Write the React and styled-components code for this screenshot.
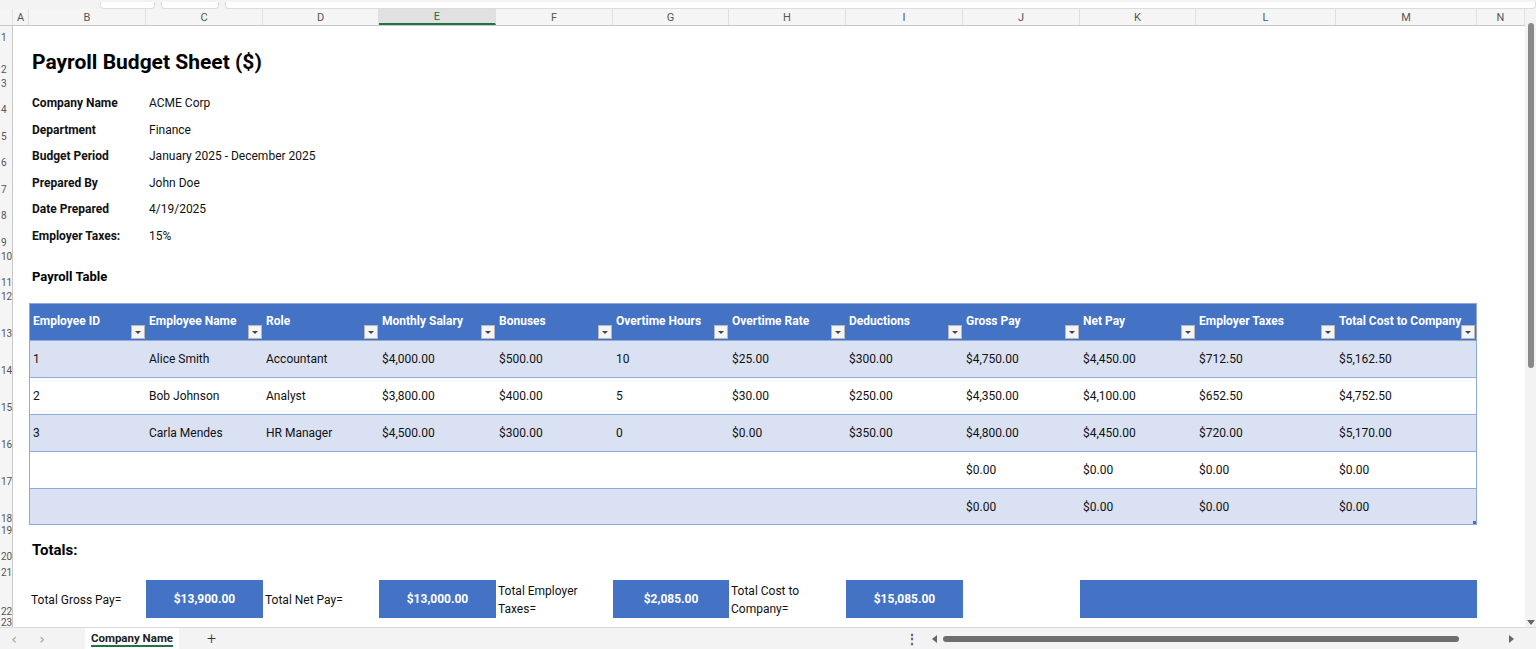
import React from 'react';
import styled, { createGlobalStyle } from 'styled-components';

const GlobalStyle = createGlobalStyle`
  html, body { margin: 0; padding: 0; background: #fff; overflow: hidden; }
  body { font-family: Roboto, "Liberation Sans", sans-serif; color: #1f1f1f; }
`;

const COLS = '13px 16px 117px 117px 116px 117px 117px 116px 117px 117px 117px 116px 140px 141px 48px';
const LETTERS = ['A', 'B', 'C', 'D', 'E', 'F', 'G', 'H', 'I', 'J', 'K', 'L', 'M', 'N'];
const ROW_H = [18, 32, 14, 26, 27, 26, 27, 26, 27, 14, 26, 14, 37, 37, 37, 37, 37, 37, 12, 26, 16, 39, 11];

const Page = styled.div`
  width: 1536px;
  height: 649px;
  display: flex;
  flex-direction: column;
  overflow: hidden;
`;

const TopStrip = styled.div`
  height: 9px;
  background: #f3f3f3;
  display: flex;
  gap: 6px;
  padding-left: 100px;
  align-items: flex-end;
`;

const StripBox = styled.div`
  width: ${p => p.w}px;
  height: 6px;
  background: #fff;
  border: 1px solid #dcdcdc;
  border-top: none;
  border-radius: 0 0 4px 4px;
`;

const Main = styled.div`
  flex: 1;
  display: flex;
  min-height: 0;
`;

const Grid = styled.div`
  width: 1525px;
  display: flex;
  flex-direction: column;
  overflow: hidden;
`;

const Row = styled.div`
  display: grid;
  grid-template-columns: ${COLS};
  height: ${p => p.h}px;
  flex-shrink: 0;
`;

const ColHead = styled.div`
  height: 16px;
  display: grid;
  grid-template-columns: ${COLS};
  background: #f5f5f5;
  border-bottom: 1px solid #c8c8c8;
  flex-shrink: 0;
`;

const ColLetter = styled.div`
  font-size: 11px;
  color: ${p => (p.active ? '#1e6e42' : '#555')};
  background: ${p => (p.active ? '#e1e1e1' : 'transparent')};
  border-bottom: ${p => (p.active ? '2px solid #217346' : 'none')};
  border-right: 1px solid #e0e0e0;
  display: flex;
  align-items: center;
  justify-content: center;
`;

const RowNum = styled.div`
  background: #f5f5f5;
  border-right: 1px solid #c8c8c8;
  font-size: 10px;
  color: #555;
  display: flex;
  align-items: flex-end;
  padding-left: 1px;
  padding-bottom: 1px;
  overflow: hidden;
`;

const Title = styled.div`
  grid-column: 3 / 8;
  font-size: 21px;
  font-weight: 700;
  color: #000;
  display: flex;
  align-items: center;
  padding-left: 3px;
  padding-top: 4px;
`;

const Label = styled.div`
  font-size: 12px;
  font-weight: ${p => (p.bold ? 700 : 400)};
  color: #111;
  display: flex;
  align-items: center;
  padding-left: 3px;
  white-space: nowrap;
`;

const Section = styled.div`
  grid-column: 3 / 6;
  font-size: ${p => p.size}px;
  font-weight: 700;
  color: #000;
  display: flex;
  align-items: center;
  padding-left: 3px;
`;

const Cell = styled.div`
  font-size: 12px;
  display: flex;
  align-items: center;
  padding-left: 3px;
  white-space: nowrap;
  position: relative;
  background: ${p => (p.head ? '#4472c4' : p.band ? '#d9e1f2' : '#fff')};
  color: ${p => (p.head ? '#fff' : '#111')};
  font-weight: ${p => (p.head ? 700 : 400)};
  border-top: 1px solid ${p => (p.first ? '#8eaadb' : '#8eaadb')};
  border-left: ${p => (p.left ? '1px solid #8eaadb' : 'none')};
  border-right: ${p => (p.right ? '1px solid #8eaadb' : 'none')};
  border-bottom: ${p => (p.last ? '1px solid #8eaadb' : 'none')};
`;

const HeadText = styled.span`
  position: relative;
  top: -1px;
`;

const Filter = styled.div`
  position: absolute;
  right: 1px;
  bottom: 1px;
  width: 12px;
  height: 12px;
  background: #f4f4f4;
  border: 1px solid #b8b8b8;
  display: flex;
  align-items: center;
  justify-content: center;
  &::after {
    content: '';
    border-left: 3px solid transparent;
    border-right: 3px solid transparent;
    border-top: 3px solid #444;
  }
`;

const Corner = styled.div`
  position: absolute;
  right: 0;
  bottom: 0;
  width: 3px;
  height: 3px;
  background: #4472c4;
`;

const TotLabel = styled.div`
  font-size: 12px;
  color: #111;
  display: flex;
  align-items: center;
  padding-left: 2px;
  padding-top: 2px;
  line-height: 18px;
`;

const TotBox = styled.div`
  grid-column: ${p => p.span || 'auto'};
  background: #4472c4;
  color: #fff;
  font-size: 12px;
  font-weight: 700;
  display: flex;
  align-items: center;
  justify-content: center;
  margin-top: 1px;
`;

const VScroll = styled.div`
  width: 11px;
  background: #f3f3f3;
  display: flex;
  flex-direction: column;
  align-items: center;
  padding-top: 14px;
`;

const VThumb = styled.div`
  width: 6px;
  height: 345px;
  border-radius: 3px;
  background: #8a8a8a;
`;

const VArrow = styled.div`
  margin-top: auto;
  margin-bottom: 2px;
  border-left: 4px solid transparent;
  border-right: 4px solid transparent;
  border-top: 5px solid #666;
`;

const TabBar = styled.div`
  height: 21px;
  background: #f3f3f3;
  border-top: 1px solid #dadada;
  display: flex;
  align-items: center;
  flex-shrink: 0;
`;

const Nav = styled.div`
  width: 28px;
  text-align: center;
  color: #9a9a9a;
  font-size: 14px;
  font-family: "DejaVu Sans", sans-serif;
`;

const Tab = styled.div`
  margin-left: 29px;
  width: 94px;
  height: 21px;
  background: #fff;
  display: flex;
  align-items: center;
  justify-content: center;
  font-size: 11.5px;
  font-weight: 700;
  color: #222;
  span { border-bottom: 2px solid #217346; line-height: 14px; }
`;

const Plus = styled.div`
  margin-left: 28px;
  font-size: 16px;
  color: #333;
  font-weight: 300;
`;

const Dots = styled.div`
  margin-left: 690px;
  color: #555;
  font-size: 12px;
  font-weight: 700;
`;

const HArrow = styled.div`
  margin-left: ${p => p.ml}px;
  border-top: 4px solid transparent;
  border-bottom: 4px solid transparent;
  ${p => (p.dir === 'left' ? 'border-right: 5px solid #666;' : 'border-left: 5px solid #666;')}
`;

const HThumb = styled.div`
  margin-left: 6px;
  width: 516px;
  height: 6px;
  border-radius: 3px;
  background: #6e6e6e;
`;

const headers = ['Employee ID', 'Employee Name', 'Role', 'Monthly Salary', 'Bonuses', 'Overtime Hours', 'Overtime Rate', 'Deductions', 'Gross Pay', 'Net Pay', 'Employer Taxes', 'Total Cost to Company'];
const rows = [
  ['1', 'Alice Smith', 'Accountant', '$4,000.00', '$500.00', '10', '$25.00', '$300.00', '$4,750.00', '$4,450.00', '$712.50', '$5,162.50'],
  ['2', 'Bob Johnson', 'Analyst', '$3,800.00', '$400.00', '5', '$30.00', '$250.00', '$4,350.00', '$4,100.00', '$652.50', '$4,752.50'],
  ['3', 'Carla Mendes', 'HR Manager', '$4,500.00', '$300.00', '0', '$0.00', '$350.00', '$4,800.00', '$4,450.00', '$720.00', '$5,170.00'],
  ['', '', '', '', '', '', '', '', '$0.00', '$0.00', '$0.00', '$0.00'],
  ['', '', '', '', '', '', '', '', '$0.00', '$0.00', '$0.00', '$0.00'],
];
const info = [
  ['Company Name', 'ACME Corp'],
  ['Department', 'Finance'],
  ['Budget Period', 'January 2025 - December 2025'],
  ['Prepared By', 'John Doe'],
  ['Date Prepared', '4/19/2025'],
  ['Employer Taxes:', '15%'],
];

const R = ({ n, children }) => (
  <Row h={ROW_H[n - 1]}>
    <RowNum>{n}</RowNum>
    {children}
  </Row>
);

export default function App() {
  return (
    <Page>
      <GlobalStyle />
      <TopStrip>
        <StripBox w={55} />
        <StripBox w={58} />
        <StripBox w={1360} />
      </TopStrip>
      <Main>
        <Grid>
          <ColHead>
            <ColLetter />
            {LETTERS.map(l => <ColLetter key={l} active={l === 'E'}>{l}</ColLetter>)}
          </ColHead>
          <R n={1} />
          <R n={2}><div /><Title>Payroll Budget Sheet ($)</Title></R>
          <R n={3} />
          {info.map(([k, v], i) => (
            <R key={k} n={4 + i}><div /><Label bold>{k}</Label><Label>{v}</Label></R>
          ))}
          <R n={10} />
          <R n={11}><div /><Section size={13}>Payroll Table</Section></R>
          <R n={12} />
          <R n={13}>
            <div />
            {headers.map((h, i) => (
              <Cell key={h} head left={i === 0} right={i === 11}>
                <HeadText>{h}</HeadText>
                <Filter />
              </Cell>
            ))}
          </R>
          {rows.map((r, ri) => (
            <R key={ri} n={14 + ri}>
              <div />
              {r.map((v, i) => (
                <Cell key={i} band={ri % 2 === 0} left={i === 0} right={i === 11} last={ri === 4}>
                  {v}
                  {ri === 4 && i === 11 && <Corner />}
                </Cell>
              ))}
            </R>
          ))}
          <R n={19} />
          <R n={20}><div /><Section size={15}>Totals:</Section></R>
          <R n={21} />
          <R n={22}>
            <div />
            <TotLabel>Total Gross Pay=</TotLabel>
            <TotBox>$13,900.00</TotBox>
            <TotLabel>Total Net Pay=</TotLabel>
            <TotBox>$13,000.00</TotBox>
            <TotLabel>Total Employer<br />Taxes=</TotLabel>
            <TotBox>$2,085.00</TotBox>
            <TotLabel>Total Cost to<br />Company=</TotLabel>
            <TotBox>$15,085.00</TotBox>
            <div />
            <TotBox span="span 3" />
          </R>
          <R n={23} />
        </Grid>
        <VScroll>
          <VThumb />
          <VArrow />
        </VScroll>
      </Main>
      <TabBar>
        <Nav>‹</Nav>
        <Nav>›</Nav>
        <Tab><span>Company Name</span></Tab>
        <Plus>+</Plus>
        <Dots>⋮</Dots>
        <HArrow dir="left" ml={14} />
        <HThumb />
        <HArrow dir="right" ml={50} />
      </TabBar>
    </Page>
  );
}
